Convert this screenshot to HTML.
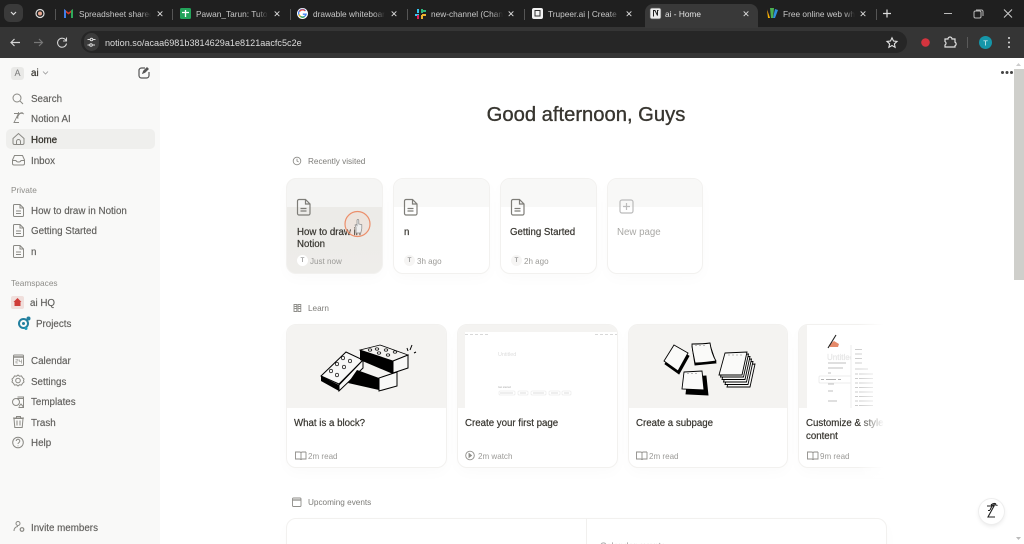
<!DOCTYPE html>
<html lang="en"><head><meta charset="utf-8"><title>ai - Home</title>
<style>
*{box-sizing:border-box}
html,body{margin:0;padding:0;width:1024px;height:544px;overflow:hidden;background:#fff;font-family:"Liberation Sans",sans-serif}
#r{position:relative;width:1024px;height:544px;overflow:hidden;background:#fff}
.t{position:absolute;white-space:nowrap;line-height:14px;height:14px}
.b{position:absolute}
.tab{color:#c9c9c9;font-size:8.3px;overflow:hidden;width:72px;-webkit-mask-image:linear-gradient(90deg,#000 85%,transparent)}
.x{color:#ddd;font-size:9px;width:10px;text-align:center}
.sep{position:absolute;top:9px;width:1px;height:11px;background:#555}
.s{color:#5f5e5b;font-size:9.8px;left:31px;-webkit-text-stroke:.15px #5f5e5b;transform:translateY(1px)}
.h{color:#8d8c88;font-size:8.3px;left:11px}
.card{position:absolute;background:#fff;border-radius:10px;border:1px solid #f2f1ef;box-shadow:0 5px 14px rgba(0,0,0,.02);overflow:hidden}
.band{position:absolute;left:0;right:0;top:0;background:#f8f8f7}
.ttl{color:#37352f;font-size:9.7px;-webkit-text-stroke:.2px #37352f;transform:translateY(1px)}
.sub{color:#9b9a97;font-size:8.05px;transform:translateY(1px)}
.lab{color:#7d7c78;font-size:8.2px;transform:translateY(1px)}
</style></head><body><div id="r">

<!-- chrome -->
<div class="b" style="left:0;top:0;width:1024px;height:27px;background:#1f1f1f"></div>
<div class="b" style="left:0;top:27px;width:1024px;height:31px;background:#353535"></div>
<div class="b" style="left:645px;top:4px;width:113px;height:24px;background:#393939;border-radius:8px 8px 0 0"></div>
<div class="b" style="left:4px;top:4px;width:19px;height:18px;background:#3a3a3a;border-radius:6px"></div>
<div class="b" style="left:81px;top:31px;width:826px;height:22px;background:#262626;border-radius:11px"></div>
<div class="b" style="left:84px;top:33px;width:15px;height:18px;background:#3b3b3b;border-radius:9px"></div>

<div class="sep" style="left:55px"></div><div class="sep" style="left:172px"></div><div class="sep" style="left:290px"></div><div class="sep" style="left:407px"></div><div class="sep" style="left:524px"></div><div class="sep" style="left:876px"></div>

<div class="t tab" style="left:79px;top:7px">Spreadsheet shared</div><div class="t x" style="left:155px;top:7px">✕</div>
<div class="t tab" style="left:196px;top:7px">Pawan_Tarun: Tutorial</div><div class="t x" style="left:272px;top:7px">✕</div>
<div class="t tab" style="left:313px;top:7px">drawable whiteboard</div><div class="t x" style="left:389px;top:7px">✕</div>
<div class="t tab" style="left:431px;top:7px">new-channel (Channel)</div><div class="t x" style="left:506px;top:7px">✕</div>
<div class="t tab" style="left:548px;top:7px">Trupeer.ai | Create Pro</div><div class="t x" style="left:624px;top:7px">✕</div>
<div class="t tab" style="left:665px;top:7px;color:#e3e3e3">ai - Home</div><div class="t x" style="left:741px;top:7px">✕</div>
<div class="t tab" style="left:783px;top:7px">Free online web whiteboard</div><div class="t x" style="left:858px;top:7px">✕</div>
<div class="t" style="left:105px;top:36px;color:#dcdcdc;font-size:9.1px">notion.so/acaa6981b3814629a1e8121aacfc5c2e</div>

<!-- sidebar -->
<div class="b" style="left:0;top:58px;width:160px;height:486px;background:#f9f9f8"></div>
<div class="b" style="left:6px;top:129px;width:149px;height:20px;background:#efefed;border-radius:5px"></div>
<div class="b" style="left:11px;top:67px;width:13px;height:13px;background:#e9e9e7;border-radius:3px;color:#777;font-size:9px;line-height:13px;text-align:center">A</div>
<div class="t" style="left:31px;top:67px;color:#37352f;font-size:9.8px;-webkit-text-stroke:.2px #37352f">ai</div>
<div class="t s" style="top:92px">Search</div>
<div class="t s" style="top:112px">Notion AI</div>
<div class="t s" style="top:133px;color:#37352f;-webkit-text-stroke:.3px #37352f">Home</div>
<div class="t s" style="top:154px">Inbox</div>
<div class="t h" style="top:183px">Private</div>
<div class="t s" style="top:204px">How to draw in Notion</div>
<div class="t s" style="top:224px">Getting Started</div>
<div class="t s" style="top:245px">n</div>
<div class="t h" style="top:276px">Teamspaces</div>
<div class="t s" style="top:296px;left:30px">ai HQ</div>
<div class="t s" style="top:317px;left:36px">Projects</div>
<div class="t s" style="top:354px">Calendar</div>
<div class="t s" style="top:375px">Settings</div>
<div class="t s" style="top:395px">Templates</div>
<div class="t s" style="top:416px">Trash</div>
<div class="t s" style="top:436px">Help</div>
<div class="t s" style="top:521px">Invite members</div>

<!-- main -->
<div class="t" style="left:386px;width:400px;text-align:center;top:103px;height:24px;line-height:24px;color:#37352f;font-size:20.2px;-webkit-text-stroke:.35px #37352f">Good afternoon, Guys</div>

<div class="t lab" style="left:308px;top:154px">Recently visited</div>

<div class="card" style="left:286px;top:178px;width:97px;height:96px;background:linear-gradient(180deg,#ebeae7 0,#eeedea 100%)"><div class="band" style="height:28px;background:#f5f5f4"></div></div>
<div class="card" style="left:393px;top:178px;width:97px;height:96px"><div class="band" style="height:28px"></div></div>
<div class="card" style="left:500px;top:178px;width:97px;height:96px"><div class="band" style="height:28px"></div></div>
<div class="card" style="left:607px;top:178px;width:96px;height:96px"><div class="band" style="height:28px"></div></div>

<div class="t ttl" style="left:297px;top:225px">How to draw in</div>
<div class="t ttl" style="left:297px;top:237px">Notion</div>
<div class="t ttl" style="left:404px;top:225px">n</div>
<div class="t ttl" style="left:510px;top:225px">Getting Started</div>
<div class="t ttl" style="left:617px;top:225px;color:#a9a8a5;-webkit-text-stroke:0">New page</div>

<div class="b" style="left:297px;top:255px;width:11px;height:11px;border-radius:50%;background:#fff;color:#777;font-size:6.5px;line-height:11px;text-align:center">T</div>
<div class="t sub" style="left:310px;top:254px">Just now</div>
<div class="b" style="left:404px;top:255px;width:11px;height:11px;border-radius:50%;background:#f6f5f4;color:#777;font-size:6.5px;line-height:11px;text-align:center">T</div>
<div class="t sub" style="left:417px;top:254px">3h ago</div>
<div class="b" style="left:511px;top:255px;width:11px;height:11px;border-radius:50%;background:#f6f5f4;color:#777;font-size:6.5px;line-height:11px;text-align:center">T</div>
<div class="t sub" style="left:524px;top:254px">2h ago</div>

<div class="t lab" style="left:308px;top:301px">Learn</div>

<div class="card" style="left:286px;top:324px;width:161px;height:144px"><div class="band" style="height:83px;background:#f4f3f1"></div></div>
<div class="card" style="left:457px;top:324px;width:161px;height:144px"><div class="band" style="height:83px;background:#f4f3f1"></div><div class="b" style="left:7px;top:7px;width:153px;height:76px;background:#fff"></div></div>
<div class="card" style="left:628px;top:324px;width:160px;height:144px"><div class="band" style="height:83px;background:#f4f3f1"></div></div>
<div class="card" style="left:798px;top:324px;width:160px;height:144px"><div class="band" style="height:83px;background:#f4f3f1"></div><div class="b" style="left:8px;top:0;width:151px;height:83px;background:#fff"></div></div>

<div class="t" style="left:498px;top:348px;color:#ddd;font-size:5.4px">Untitled</div>
<div class="t" style="left:498px;top:381px;color:#aaa;font-size:2.6px">Get started</div>
<div class="t" style="left:827px;top:351px;color:#e6e6e6;font-size:8px;-webkit-text-stroke:.2px #e6e6e6">Untitled</div>

<div class="t ttl" style="left:294px;top:416px">What is a block?</div>
<div class="t ttl" style="left:465px;top:416px">Create your first page</div>
<div class="t ttl" style="left:636px;top:416px">Create a subpage</div>
<div class="t ttl" style="left:806px;top:416px">Customize &amp; style your</div>
<div class="t ttl" style="left:806px;top:429px">content</div>
<div class="t sub" style="left:308px;top:449px">2m read</div>
<div class="t sub" style="left:478px;top:449px">2m watch</div>
<div class="t sub" style="left:649px;top:449px">2m read</div>
<div class="t sub" style="left:820px;top:449px">9m read</div>

<div class="t lab" style="left:308px;top:495px">Upcoming events</div>
<div class="card" style="left:286px;top:518px;width:601px;height:40px"></div>
<div class="b" style="left:586px;top:518px;width:1px;height:26px;background:#f1f0ee"></div>
<div class="t" style="left:600px;top:539px;color:#aaa;font-size:9px;-webkit-text-stroke:.2px #aaa">Calendar events</div>

<!-- scrollbar -->
<div class="b" style="left:1014px;top:69px;width:10px;height:211px;background:#cfcfcb"></div>

<!-- AI button -->
<div class="b" style="left:979px;top:499px;width:25px;height:25px;border-radius:50%;background:#fff;box-shadow:0 0 0 1px #eee,0 2px 5px rgba(0,0,0,.1)"></div>

<svg class="b" style="left:0;top:0" width="1024" height="544" viewBox="0 0 1024 544" fill="none">
<defs><linearGradient id="f" x1="0" x2="1" y1="0" y2="0"><stop offset="0" stop-color="#fff" stop-opacity="0"/><stop offset="1" stop-color="#fff"/></linearGradient></defs>
<!-- tab strip icons -->
<path d="M11 12l2.500 2.500L16 12" stroke="#ddd" stroke-width="1.200"/>
<circle cx="40" cy="13.500" r="4" stroke="#ddd" stroke-width="1.200"/><circle cx="40" cy="13.500" r="2" fill="#e8a58d"/>
<path d="M64 18V9l4.500 3.500L73 9v9h-2v-5.500l-2.500 2-2.500-2V18z" fill="#d93a2d"/><path d="M64 18V9l2 1.500V18z" fill="#3f7ee8"/><path d="M71 18v-7.500L73 9v9z" fill="#2fa85a"/>
<rect x="180" y="8" width="11" height="11" rx="1.500" fill="#23a35a"/><path d="M185.500 10v7M182 12.500h7" stroke="#fff" stroke-width="1.300"/>
<circle cx="302.500" cy="13.500" r="5.500" fill="#fff"/><path d="M305.500 11a3.800 3.800 0 1 0 .6 3.200h-3.300" stroke="#4285f4" stroke-width="1.300"/><path d="M299.500 11.500a3.800 3.800 0 0 1 5.500-.8" stroke="#ea4335" stroke-width="1.300"/><path d="M299 14.500a3.800 3.800 0 0 0 1.500 2" stroke="#fbbc05" stroke-width="1.300"/><path d="M300.500 16.500a3.800 3.800 0 0 0 4 .2" stroke="#34a853" stroke-width="1.300"/>
<path d="M418 9v4M415 15h4" stroke="#36c5f0" stroke-width="2"/><path d="M422 9v4" stroke="#2eb67d" stroke-width="2"/><path d="M421 11h5" stroke="#2eb67d" stroke-width="2"/><path d="M422 15h4" stroke="#ecb22e" stroke-width="2"/><path d="M418 15v4" stroke="#e01e5a" stroke-width="2"/><path d="M422 15v4" stroke="#ecb22e" stroke-width="2"/>
<rect x="532" y="8" width="11" height="11" rx="2" fill="#f2f2f2"/><rect x="535" y="10.500" width="5" height="5.500" stroke="#333" stroke-width="1"/>
<rect x="650" y="8" width="11" height="11" rx="2" fill="#eee" stroke="#555" stroke-width=".7"/><path d="M653 10.500h2l2.500 5v-5h1M653.500 10.500v6" stroke="#222" stroke-width="1"/>
<path d="M767 9l2 9h1z" fill="#e2583e"/><path d="M770 8l1 10h2l1-10z" fill="#4caf50"/><path d="M775 9l-2 9h2l3-8z" fill="#2d8fdc"/><path d="M767 10l3 8h-2z" fill="#f4b400"/>
<path d="M883 13.500h8M887 9.500v8" stroke="#ddd" stroke-width="1.200"/>
<path d="M944 13.500h8" stroke="#bbb" stroke-width="1"/>
<rect x="974" y="11" width="7" height="7" rx="1.500" stroke="#bbb" stroke-width="1"/><path d="M976 10h5.500a1.500 1.500 0 0 1 1.500 1.500V16" stroke="#bbb" stroke-width="1"/>
<path d="M1004 9.500l8 8M1012 9.500l-8 8" stroke="#ccc" stroke-width="1"/>
<!-- toolbar -->
<path d="M20 42.500h-9M14.500 39l-3.500 3.500 3.500 3.500" stroke="#d5d5d5" stroke-width="1.200"/>
<path d="M34 42.500h8M39 39l3.500 3.500L39 46" stroke="#777" stroke-width="1.200"/>
<path d="M66 40.500a4.500 4.500 0 1 0 .5 3M66.500 37.500v3.500H63" stroke="#d5d5d5" stroke-width="1.100"/>
<path d="M87.500 39.500h3M93 39.500h2.500M87.500 45h2M92 45h3" stroke="#ddd" stroke-width="1.100"/><circle cx="91.500" cy="39.500" r="1.300" stroke="#ddd"/><circle cx="91" cy="45" r="1.300" stroke="#ddd"/>
<path d="M892 37.800l1.500 3.200 3.500.4-2.600 2.400.7 3.500-3.100-1.800-3.100 1.800.7-3.500-2.600-2.400 3.500-.4z" stroke="#e3e3e3" stroke-width="1.100"/>
<circle cx="925.500" cy="42.500" r="4.300" fill="#d3343e"/>
<path d="M945 39h3a2 2 0 0 1 4 0h3v3.200a2 2 0 0 1 0 3.600V47h-10v-2a2 2 0 0 0 0-3.500z" stroke="#e0e0e0" stroke-width="1.200"/>
<rect x="967" y="37" width="1" height="11" fill="#5a5a5a"/>
<circle cx="985.500" cy="42.500" r="6.500" fill="#1596a9"/>
<text x="985.500" y="45.500" font-size="7.500" fill="#e8f6f8" text-anchor="middle" font-family="Liberation Sans, sans-serif">T</text>
<circle cx="1009" cy="38" r="1" fill="#ddd"/><circle cx="1009" cy="42.500" r="1" fill="#ddd"/><circle cx="1009" cy="47" r="1" fill="#ddd"/>
<!-- main dots, scroll arrows -->
<circle cx="1002.500" cy="72.500" r="1.500" fill="#444"/><circle cx="1007" cy="72.500" r="1.500" fill="#444"/><circle cx="1011.500" cy="72.500" r="1.500" fill="#444"/>
<path d="M1016 66l2.500-3 2.500 3z" fill="#ccc"/><path d="M1016 537l2.500 3 2.500-3z" fill="#bbb"/>
<!-- sidebar icons -->
<g stroke="#8a8984" stroke-width="1">
<path d="M43 71.500l2.500 2.500 2.500-2.500" stroke="#999" stroke-width=".8"/>
<g transform="translate(-4,-2)"><path d="M149 70h-3.500a2.500 2.500 0 0 0-2.500 2.500v5a2.500 2.500 0 0 0 2.500 2.500h5a2.500 2.500 0 0 0 2.500-2.500V74" stroke="#555" stroke-width="1.200"/><path d="M146.500 75.500l1-2.500 3.500-3.500 1.500 1.500-3.500 3.500z" fill="#555" stroke="#555" stroke-width=".7"/></g>
<g transform="translate(0,1)"><circle cx="17" cy="97" r="4"/><path d="M20 100l3 3"/></g>
<path d="M14 113.500h4.500l-4.500 9h5M18.500 113.500v-1.500M17 118l2-3.500c1-1.500 3-1.500 5-.5M19 114c1.500-1.500 3-1.500 4-1M18.500 118h-1.500" stroke-width=".9"/>
<g transform="translate(0,-1)"><path d="M13 139.500l5.500-5 5.500 5v4.500a1.500 1.500 0 0 1-1.500 1.500h-8a1.500 1.500 0 0 1-1.500-1.500z"/><path d="M16.500 145.500v-3a2 2 0 0 1 4 0v3"/></g>
<path d="M12.500 160l2-4.500h8l2 4.500v3.500a1.500 1.500 0 0 1-1.500 1.500h-9a1.500 1.500 0 0 1-1.500-1.500zM12.500 160.500h3.500c.5 2 4.500 2 5 0h3.500"/>
<path d="M14.500 204.500h5.500l3.500 3.500v7.500a1 1 0 0 1-1 1h-8a1 1 0 0 1-1-1v-10a1 1 0 0 1 1-1zM20 204.500V208h3.500M16 211h5M16 213.500h5"/>
<path d="M14.500 224.500h5.500l3.500 3.500v7.500a1 1 0 0 1-1 1h-8a1 1 0 0 1-1-1v-10a1 1 0 0 1 1-1zM20 224.500V228h3.500M16 231h5M16 233.500h5"/>
<path d="M14.500 245.500h5.500l3.500 3.500v7.500a1 1 0 0 1-1 1h-8a1 1 0 0 1-1-1v-10a1 1 0 0 1 1-1zM20 245.500V249h3.500M16 252h5M16 254.500h5"/>
<rect x="13.500" y="355" width="10" height="10.500" rx="1"/><path d="M13.500 357h10" stroke-width="1.500"/><path d="M15.500 359.500h2.500v1.500h-2v2h2M19.500 359.500v2h2M21.500 359.500v4" stroke-width=".6"/>
<circle cx="18" cy="380.500" r="2.300"/><path d="M18 375l1.500 1.200 2-.3 1 1.800 1.500 1.300-.5 1.500.5 1.500-1.500 1.300-1 1.800-2-.3-1.500 1.200-1.500-1.200-2 .3-1-1.800-1.500-1.300.5-1.500-.5-1.500 1.500-1.300 1-1.800 2 .3z"/>
<path d="M17 398.500h6.500v9h-5M17.500 397h6v10.500"/><circle cx="16" cy="402" r="3.500"/><path d="M19 406.500l2-2.500 2.500 3"/>
<path d="M14 418.500h9l-.8 9h-7.400zM13 418h11M16.500 418v-1.500h4v1.500M17 420.500v5M20 420.500v5"/>
<circle cx="18" cy="442.500" r="5.300"/><path d="M16.200 441a1.800 1.800 0 1 1 2.800 1.500c-.7.400-1 .8-1 1.500M18 445.500v.7"/>
<circle cx="18" cy="523.500" r="2"/><path d="M14 531c0-3 2-4.500 4-4.500"/><circle cx="22" cy="529.500" r="1.800" stroke-width="1.200"/>
</g>
<rect x="11" y="296" width="13" height="13" rx="2" fill="#f0dfdc"/><path d="M17.500 298l-4 4h1v4h6v-4h1z" fill="#cf3c38"/>
<circle cx="23.500" cy="323.500" r="4.500" stroke="#23809f" stroke-width="2"/><circle cx="23.500" cy="323.500" r="1.500" fill="#23809f"/><circle cx="28.500" cy="318.500" r="2" fill="#23809f"/><circle cx="26" cy="328.500" r="1.500" fill="#1f9fc0"/>
<!-- section labels -->
<g stroke="#8f8e8a" stroke-width=".9">
<circle cx="297" cy="161" r="3.800"/><path d="M297 158.800V161l1.600 1"/>
<path d="M294 304.500h2.800v7H294zM298 304.500h2.800v7H298zM294.500 306.500h2M294.500 308.500h2M298.500 306.500h2M298.500 308.500h2"/>
<rect x="292.500" y="498" width="8.500" height="8.500" rx="1"/><path d="M292.500 500h8.500" stroke-width="1.300"/>
</g>
<!-- doc icons -->
<g stroke="#7e7d78" stroke-width="1.200">
<path d="M299 199.500h6.500l4.500 4.500v9.500a1.500 1.500 0 0 1-1.500 1.500h-9.500a1.500 1.500 0 0 1-1.500-1.500v-12.500a1.500 1.500 0 0 1 1.500-1.500zM305.500 199.500V204h4.500M300.500 208.500h6M300.500 211h6"/>
<path d="M406 199.500h6.500l4.500 4.500v9.500a1.500 1.500 0 0 1-1.500 1.500h-9.500a1.500 1.500 0 0 1-1.500-1.500v-12.500a1.500 1.500 0 0 1 1.500-1.500zM412.500 199.500V204h4.500M407.500 208.500h6M407.500 211h6"/>
<path d="M513 199.500h6.500l4.500 4.500v9.500a1.500 1.500 0 0 1-1.500 1.500h-9.500a1.500 1.500 0 0 1-1.500-1.500v-12.500a1.500 1.500 0 0 1 1.500-1.500zM519.500 199.500V204h4.500M514.500 208.500h6M514.500 211h6"/>
</g>
<rect x="620" y="200" width="13" height="13" rx="2" stroke="#bbb" stroke-width="1.200"/><path d="M626.500 203v7M623 206.500h7" stroke="#bbb" stroke-width="1.200"/>
<!-- cursor highlight -->
<circle cx="357.500" cy="224" r="12.500" fill="#f3c9b5" fill-opacity=".2" stroke="#ec8f6b" stroke-width="1.200"/>
<path d="M356 233v-6l-1-2 1.200-.5.800 1v-5c0-1.300 1.800-1.300 1.800 0v3.500l3 .6v4l-1 4.400z" fill="#eee" stroke="#888" stroke-width=".7"/>
<!-- read/watch icons -->
<g stroke="#8f8e8a" stroke-width=".9">
<path d="M295.500 452h4c1 0 1.500.5 1.500 1v7c0-.5-.5-1-1.500-1h-4zM306 452h-3.500c-1 0-1.500.5-1.500 1M306 452v7h-3.500c-1 0-1.500.5-1.500 1"/>
<circle cx="470" cy="455.500" r="4.300"/><path d="M469 453.500l2.500 2-2.500 2z" fill="#8f8e8a"/>
<path d="M636.500 452h4c1 0 1.500.5 1.500 1v7c0-.5-.5-1-1.500-1h-4zM647 452h-3.500c-1 0-1.500.5-1.500 1M647 452v7h-3.500c-1 0-1.500.5-1.500 1"/>
<path d="M807.500 452h4c1 0 1.500.5 1.500 1v7c0-.5-.5-1-1.500-1h-4zM818 452h-3.500c-1 0-1.500.5-1.500 1M818 452v7h-3.500c-1 0-1.500.5-1.500 1"/>
</g>
<!-- AI button icon -->
<path d="M987 506h7l-6 11h7M991.500 506v-2M990 510l2-4c1-1.500 3.500-1.500 5.500-.5M991 505c1.500-1.500 3.500-2 5-1M990 510.500h-2" stroke="#222" stroke-width="1.100"/>
<!-- bricks -->
<g>
<path d="M321 376l25-24 17 8-24 24z" fill="#f8f8f7" stroke="#000" stroke-width="1"/>
<path d="M321 376l18 9v6l-18-10z" fill="#000"/>
<path d="M339 385l24-25v8l-24 23z" fill="#f8f8f7" stroke="#000" stroke-width="1"/>
<path d="M357 370l22 8v12l-31-7z" fill="#000"/>
<path d="M379 378l18-6v14l-18 5z" fill="#f8f8f7" stroke="#000" stroke-width="1"/>
<path d="M360 350l20-5 28 10-15 6z" fill="#f4f3f1" stroke="#000" stroke-width=".8"/>
<path d="M360 350l33 11v13l-33-14z" fill="#000"/>
<path d="M393 361l15-6v13l-15 5z" fill="#f8f8f7" stroke="#000" stroke-width="1"/>
<g fill="#f4f3f1" stroke="#000" stroke-width=".7">
<ellipse cx="343" cy="358" rx="1.500" ry="1.800"/><ellipse cx="350" cy="361" rx="1.500" ry="1.800"/>
<ellipse cx="337" cy="364" rx="1.500" ry="1.800"/><ellipse cx="344" cy="367" rx="1.500" ry="1.800"/>
<ellipse cx="331" cy="371" rx="1.500" ry="1.800"/><ellipse cx="337" cy="375" rx="1.500" ry="1.800"/>
<ellipse cx="377" cy="349" rx="1.800" ry="1.200"/><ellipse cx="386" cy="350" rx="1.800" ry="1.200"/><ellipse cx="395" cy="352" rx="1.800" ry="1.200"/>
<ellipse cx="370" cy="350" rx="1.800" ry="1.200"/><ellipse cx="379" cy="353" rx="1.800" ry="1.200"/><ellipse cx="388" cy="355" rx="1.800" ry="1.200"/>
</g>
<path d="M407 348l1 3M412 345l-2 5M416 352l-2 1" stroke="#000" stroke-width="1"/>
</g>
<!-- notes -->
<g stroke="#000" stroke-width=".9" fill="#fafaf9">
<path d="M674 345l14 8-10 18-14-10z" fill="#000" transform="translate(1,3)"/>
<path d="M674 345l14 8-10 18-14-10z"/>
<path d="M692 344l18-1 6 18-21 2z" fill="#000" transform="translate(0,2)"/>
<path d="M692 344c6 0 12 0 18-1 1 7 3 13 6 18-7 1-14 2-21 2-1-7-3-13-3-19z"/>
<path d="M684 372l18-1 2 19-22-1z" fill="#000" transform="translate(4,5)"/>
<path d="M684 372l18-1 2 19-22-1z"/>
<g><path d="M725 353l22-1-5 23h-23z" transform="translate(8,12)"/><path d="M725 353l22-1-5 23h-23z" transform="translate(6,9.500)"/><path d="M725 353l22-1-5 23h-23z" transform="translate(4.500,7)"/><path d="M725 353l22-1-5 23h-23z" transform="translate(3,4.500)"/><path d="M725 353l22-1-5 23h-23z" transform="translate(1.500,2)"/><path d="M725 353l22-1-5 23h-23z"/></g>
</g>
<g fill="#555"><circle cx="729" cy="355" r=".5"/><circle cx="733" cy="355" r=".5"/><circle cx="737" cy="355" r=".5"/><circle cx="741" cy="355" r=".5"/><circle cx="696" cy="345.500" r=".5"/><circle cx="700" cy="345.500" r=".5"/><circle cx="704" cy="345.500" r=".5"/><circle cx="688" cy="373.500" r=".5"/><circle cx="692" cy="373.500" r=".5"/><circle cx="696" cy="373.500" r=".5"/></g>
<!-- first page thumbnail -->
<path d="M465 334.500h25M595 334.500h22" stroke="#ccc" stroke-width=".7" stroke-dasharray="3 2"/>
<g stroke="#e6e6e6" stroke-width=".6"><rect x="499" y="391" width="16" height="4" rx="1"/><rect x="518" y="391" width="10" height="4" rx="1"/><rect x="531" y="391" width="15" height="4" rx="1"/><rect x="549" y="391" width="11" height="4" rx="1"/><rect x="562" y="391" width="9" height="4" rx="1"/></g>
<path d="M500 393h13M520 393h6M533 393h11M551 393h7M564 393h5" stroke="#bbb" stroke-width=".6"/>
<!-- customize thumbnail -->
<path d="M829 345l5-4 5 3-1 3h-8z" fill="#e58a6a"/><path d="M828 348l8-13" stroke="#222" stroke-width="1.100"/>
<path d="M828 363h18M828 368h15M828 373h3M828 384h6M828 391h5M828 401h9" stroke="#aaa" stroke-width=".8"/>
<rect x="819" y="376" width="36" height="7" rx="1" fill="#fff" stroke="#e6e6e6" stroke-width=".7"/>
<path d="M821 379.500h3M826 379.500h10M838 379.500h3" stroke="#999" stroke-width=".8"/>
<rect x="851" y="345" width="30" height="63" fill="#fff"/>
<path d="M851 345v63" stroke="#eee"/>
<g stroke="#ccc" stroke-width=".9"><path d="M855 349.500h7M855 354h7M855 358.500h7M855 363h7"/><path d="M855 369h13"/><path d="M855 374h18M855 378.500h18M855 383h18M855 387.500h18M855 392h18M855 396.500h18M855 401h18M855 405.500h18" stroke-dasharray="3 1 14"/></g>
<!-- fade -->
<rect x="858" y="318" width="26" height="160" fill="url(#f)"/>
<rect x="884" y="318" width="96" height="165" fill="#fff"/>
</svg>
</div></body></html>
